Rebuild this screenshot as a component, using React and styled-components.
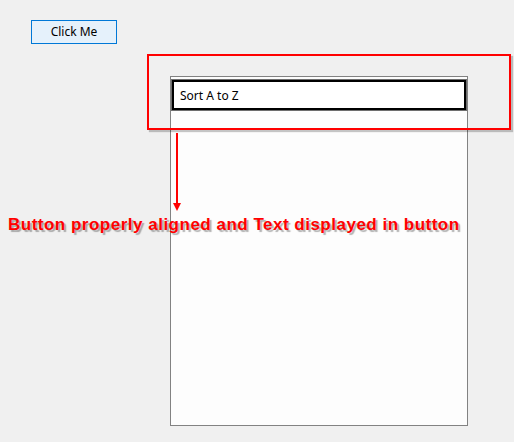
import styled, { createGlobalStyle } from "styled-components";

const GlobalStyle = createGlobalStyle`
    html, body {
        margin: 0;
        padding: 0;
        background: #f0f0f0;
    }
    * {
        box-sizing: border-box;
    }
`;

const App = () => {
    return (
        <StyledPage>
            <GlobalStyle />
            <ClickButton>Click Me</ClickButton>
            <ListPanel>
                <SortButton>Sort A to Z</SortButton>
            </ListPanel>

            {/* annotation drawn over the form */}
            <Highlight />
            <Arrow width="10" height="80" viewBox="0 0 10 80">
                <line x1="5" y1="0" x2="5" y2="72" stroke="#ff0000" strokeWidth="2" />
                <polygon points="1,70 9,70 5,78" fill="#ff0000" />
            </Arrow>
            <Note>Button properly aligned and Text displayed in button</Note>
        </StyledPage>
    );
};

const StyledPage = styled.main`
    position: relative;
    display: flex;
    flex-direction: column;
    align-items: flex-start;
    gap: 32px;
    min-height: 442px;
    padding: 20px 0 0 31px;
    font-family: "Noto Sans", "Liberation Sans", sans-serif;
    overflow: hidden;
`;

const ClickButton = styled.button`
    width: 86px;
    height: 24px;
    margin: 0;
    padding: 0;
    border: 1px solid #0078d7;
    background: #e5f1fb;
    color: #000;
    font-family: inherit;
    font-size: 12px;
    line-height: 1;
`;

const ListPanel = styled.div`
    display: flex;
    flex-direction: column;
    width: 298px;
    height: 350px;
    margin-left: 139px;
    padding: 3px 1px 0;
    border: 1px solid #828282;
    background: #fdfdfd;
`;

const SortButton = styled.button`
    display: flex;
    align-items: center;
    height: 30px;
    margin: 0;
    padding: 0 0 0 6px;
    border: 2px solid #000;
    box-shadow: 0 0 0 1px #6e6e6e;
    background: #fff;
    color: #000;
    font-family: inherit;
    font-size: 12px;
    text-align: left;
`;

const Highlight = styled.div`
    position: absolute;
    left: 147px;
    top: 54px;
    width: 364px;
    height: 76px;
    border: 2px solid #ff0000;
    box-shadow: 2px 2px 1px rgba(0, 0, 0, 0.22);
    pointer-events: none;
`;

const Arrow = styled.svg`
    position: absolute;
    left: 172px;
    top: 133px;
    overflow: visible;
`;

const Note = styled.div`
    position: absolute;
    left: 8px;
    top: 216px;
    color: #ff0000;
    font-family: "Liberation Sans", Arial, sans-serif;
    font-size: 17px;
    font-weight: bold;
    letter-spacing: 0.5px;
    line-height: 17px;
    white-space: nowrap;
    text-shadow: 2px 2px 1px rgba(0, 0, 0, 0.3);
`;

export default App;
